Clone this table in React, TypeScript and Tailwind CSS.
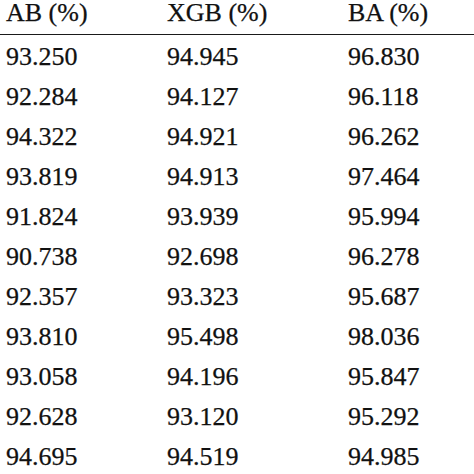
import React from 'react';

const rows = [
  ['93.250', '94.945', '96.830'],
  ['92.284', '94.127', '96.118'],
  ['94.322', '94.921', '96.262'],
  ['93.819', '94.913', '97.464'],
  ['91.824', '93.939', '95.994'],
  ['90.738', '92.698', '96.278'],
  ['92.357', '93.323', '95.687'],
  ['93.810', '95.498', '98.036'],
  ['93.058', '94.196', '95.847'],
  ['92.628', '93.120', '95.292'],
  ['94.695', '94.519', '94.985'],
];

export default function App() {
  return (
    <div className="w-[474px] h-[474px] overflow-hidden bg-white text-[#111] text-[26px] [-webkit-text-stroke:0.25px_#111] font-['Liberation_Serif','Times_New_Roman',serif]">
      {/* Header */}
      <div className="grid grid-cols-[161px_181px_1fr] pl-[6px] leading-[26px] pb-[8px] border-b-[1.5px] border-[#1a1a1a]">
        <div className="whitespace-nowrap">AB (%)</div>
        <div className="whitespace-nowrap">XGB (%)</div>
        <div className="whitespace-nowrap">BA (%)</div>
      </div>

      {/* Rows */}
      <div className="mt-[2px]">
        {rows.map((r, i) => (
          <div key={i} className="grid grid-cols-[161px_181px_1fr] pl-[6px] leading-[40px]">
            {r.map((v, j) => (
              <div key={j}>{v}</div>
            ))}
          </div>
        ))}
      </div>
    </div>
  );
}
